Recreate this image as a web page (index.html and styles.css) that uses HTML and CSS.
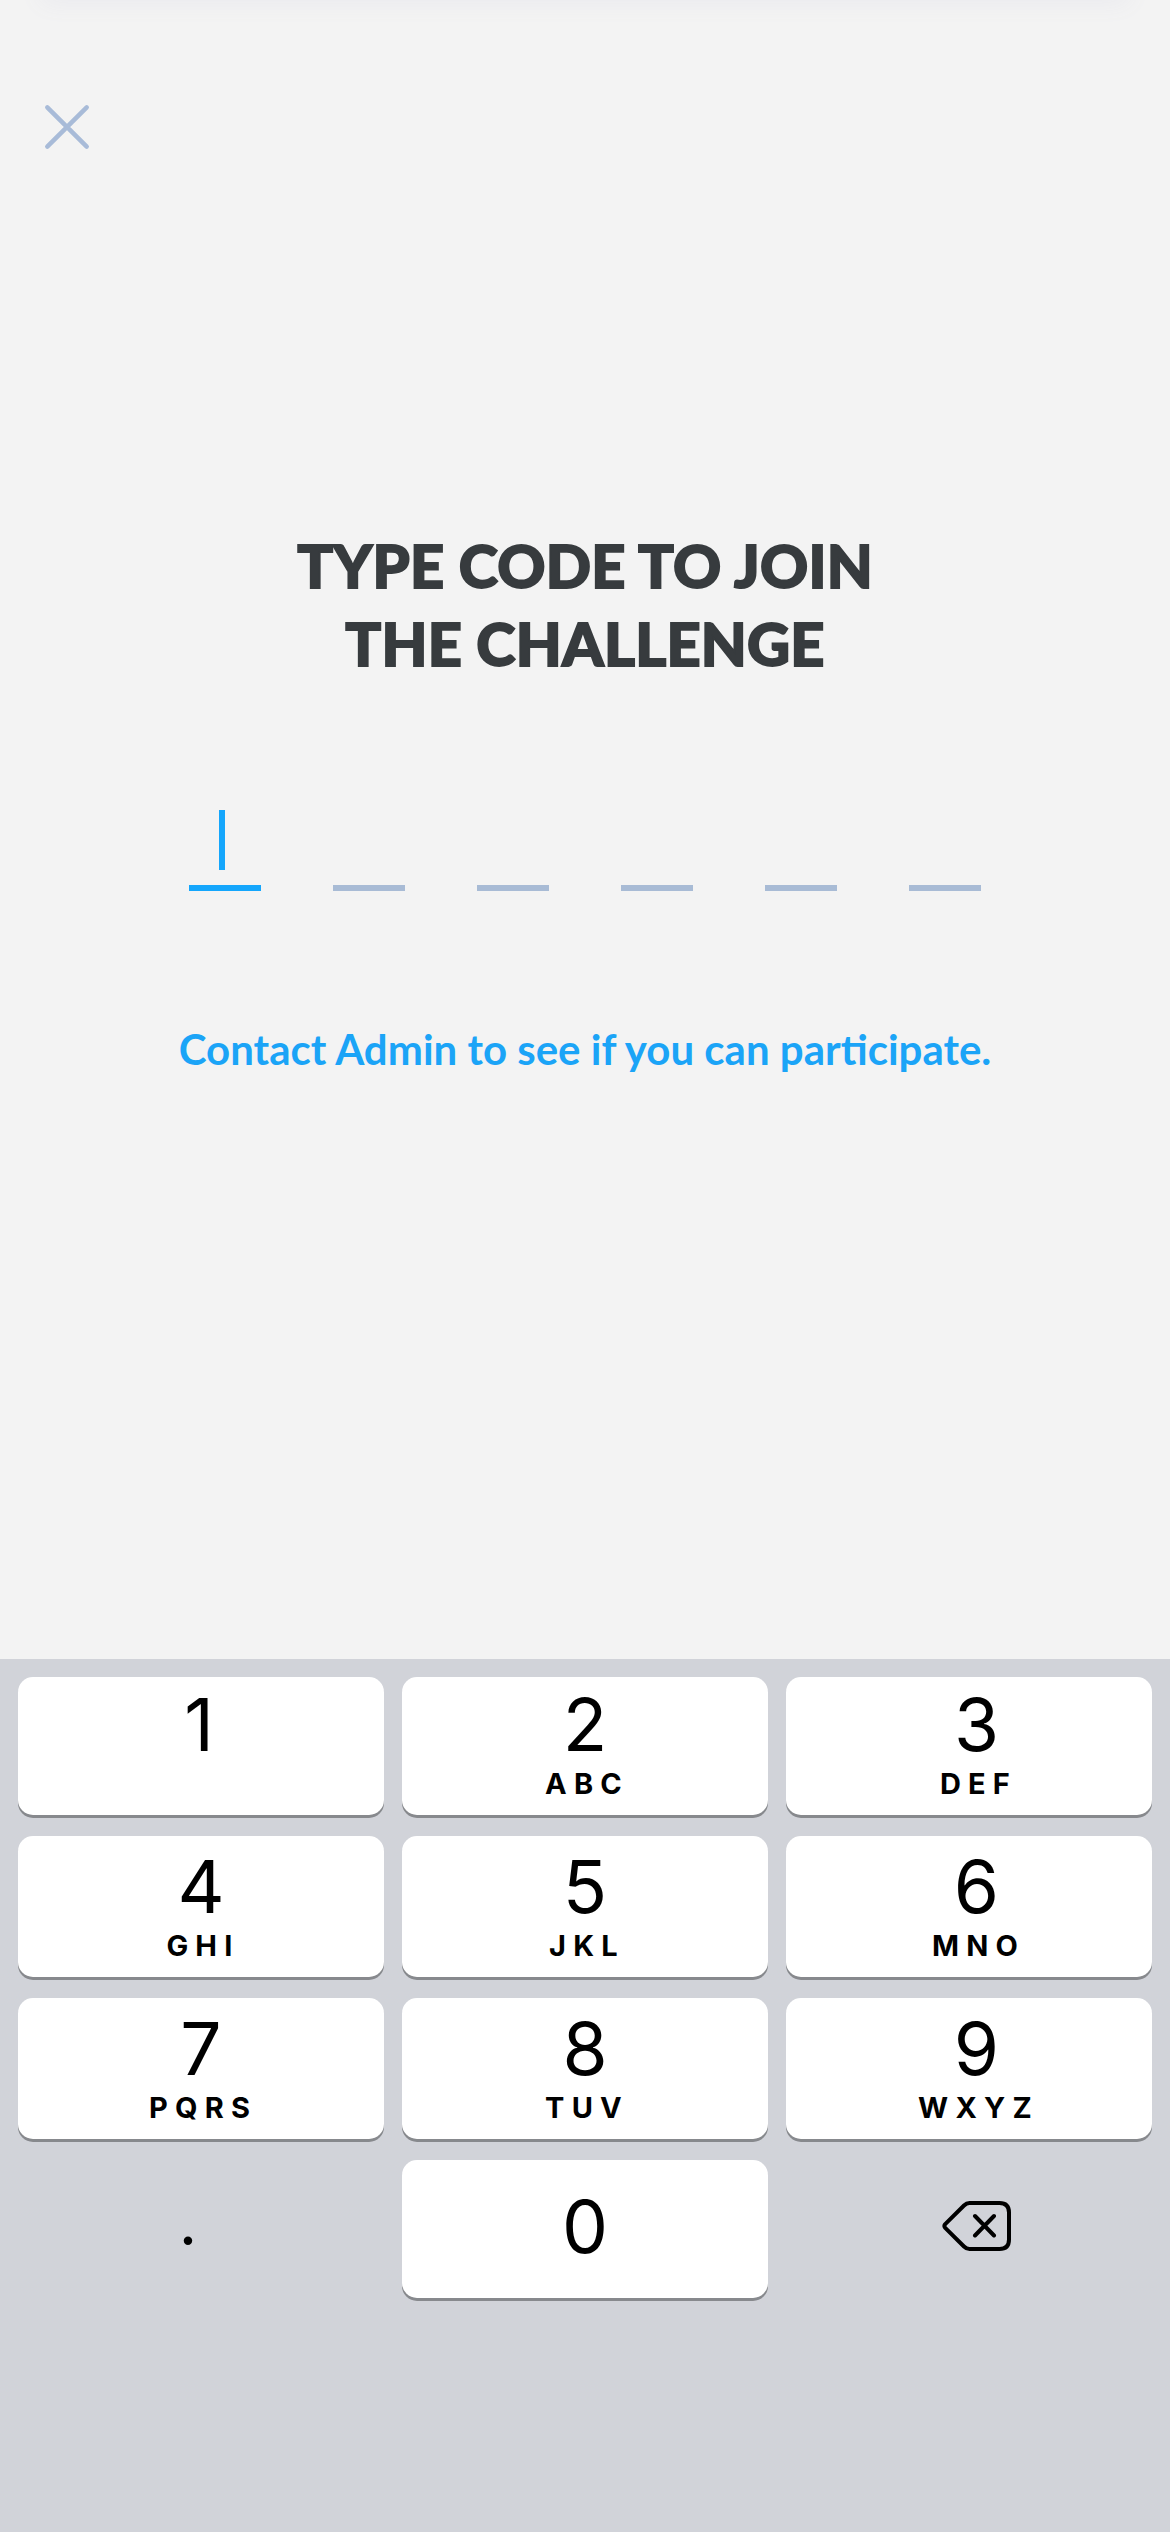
FILE: index.html
```html
<!DOCTYPE html>
<html lang="en">
<head>
<meta charset="utf-8">
<title>Join the challenge</title>
<link rel="stylesheet" href="styles.css">
</head>
<body>
<div class="app">
  <div class="top-shade"></div>
  <main class="screen">
    <button class="close" aria-label="Close">
      <svg width="48" height="48" viewBox="0 0 48 48"><path d="M4.3 4.3 43.7 43.7M43.7 4.3 4.3 43.7"/></svg>
    </button>
    <h1 class="title">TYPE CODE TO JOIN<br>THE CHALLENGE</h1>
    <div class="code">
      <div class="slot active"><span class="caret"></span></div>
      <div class="slot"></div>
      <div class="slot"></div>
      <div class="slot"></div>
      <div class="slot"></div>
      <div class="slot"></div>
    </div>
    <p class="hint">Contact Admin to see if you can participate.</p>
  </main>
  <section class="keyboard">
    <div class="key one"><span class="digit">1</span></div>
    <div class="key"><span class="digit">2</span><span class="letters">ABC</span></div>
    <div class="key right"><span class="digit">3</span><span class="letters">DEF</span></div>
    <div class="key tall"><span class="digit">4</span><span class="letters">GHI</span></div>
    <div class="key tall"><span class="digit">5</span><span class="letters">JKL</span></div>
    <div class="key tall right"><span class="digit">6</span><span class="letters">MNO</span></div>
    <div class="key tall"><span class="digit">7</span><span class="letters">PQRS</span></div>
    <div class="key tall"><span class="digit">8</span><span class="letters">TUV</span></div>
    <div class="key tall right"><span class="digit">9</span><span class="letters">WXYZ</span></div>
    <div class="key plain period"><span class="digit">.</span></div>
    <div class="key zero"><span class="digit">0</span></div>
    <div class="key plain erase">
      <svg width="70" height="52" viewBox="0 0 70 52"><path d="M27.5 3H57.5Q67 3 67 12.5V39.5Q67 49 57.5 49H27.5Q24.5 49 22 46.500L3.200 27.800Q1.600 26 3.200 24.200L22 5.500Q24.500 3 27.500 3ZM33 16 52 35.500M52 16 33 35.500"/></svg>
    </div>
  </section>
</div>
</body>
</html>
```
FILE: styles.css
```css
* { box-sizing: border-box; margin: 0; padding: 0; }

body { background: #f3f3f3; }

.app {
  position: relative;
  display: flex;
  flex-direction: column;
  width: 1170px;
  height: 2532px;
  overflow: hidden;
}

.top-shade {
  position: absolute;
  top: -20px;
  left: 44px;
  right: 44px;
  height: 20px;
  box-shadow: 0 0 24px 2px #e9e9ee;
}

.screen {
  display: flex;
  flex-direction: column;
  align-items: center;
  height: 1659px;
  padding-top: 103px;
}

.close {
  align-self: flex-start;
  height: 48px;
  margin-left: 43px;
  border: 0;
  background: none;
}

.close svg { display: block; }

.close path {
  fill: none;
  stroke: #a8bbd8;
  stroke-width: 4.5;
  stroke-linecap: round;
}

.title {
  margin-top: 375px;
  font-family: Lato, sans-serif;
  font-weight: 900;
  font-size: 59.5px;
  line-height: 78px;
  letter-spacing: 0.2px;
  -webkit-text-stroke: 1.8px #373b3e;
  color: #373b3e;
  text-align: center;
  white-space: nowrap;
}

.code {
  display: flex;
  gap: 72px;
  margin-top: 128px;
}

.slot {
  display: flex;
  justify-content: center;
  width: 72px;
  height: 81px;
  padding-right: 6px;
  border-bottom: 6px solid #a8bbd5;
}

.slot.active { border-color: #14a6fc; }

.caret {
  width: 6px;
  height: 60px;
  background: #14a6fc;
}

.hint {
  margin-top: 133px;
  font: 700 42px/50px Lato, sans-serif;
  color: #1ba4f7;
  white-space: nowrap;
}

.keyboard {
  display: grid;
  grid-template-columns: repeat(3, 366px);
  grid-template-rows: 138px 141px 141px 138px;
  gap: 21px 18px;
  height: 873px;
  padding: 18px;
  background: #d1d3d9;
  font-family: Inter, sans-serif;
  color: #000;
}

.key {
  display: flex;
  flex-direction: column;
  align-items: center;
  padding-top: 8px;
  border-radius: 15px;
  background: #fff;
  box-shadow: 0 3px 0 #87898d;
}

.key.one { padding-right: 4px; }
.key.tall { padding-top: 11px; }
.key.right { padding-left: 15px; }
.key.zero { padding-top: 27px; }

.key.plain {
  background: none;
  box-shadow: none;
}

.key.period { padding: 22px 26px 0 0; }
.key.period .digit { font-size: 64px; }
.key.erase { padding: 40px 0 0 16px; }

.digit {
  font-size: 73px;
  line-height: 80px;
  font-weight: 400;
}

.letters {
  padding-left: 4px;
  font-size: 29px;
  line-height: 37px;
  font-weight: 700;
  letter-spacing: 7.2px;
}

.erase svg { display: block; }

.erase path {
  fill: none;
  stroke: #000;
  stroke-width: 4;
  stroke-linecap: round;
  stroke-linejoin: round;
}
```
